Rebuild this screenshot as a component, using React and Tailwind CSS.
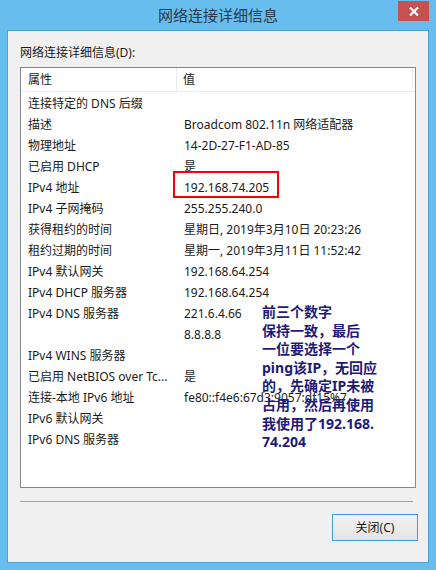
const FONT = { fontFamily: '"Noto Sans", "Noto Sans CJK SC", sans-serif' };

const ROWS = [
  ["连接特定的 DNS 后缀", ""],
  ["描述", "Broadcom 802.11n 网络适配器"],
  ["物理地址", "14-2D-27-F1-AD-85"],
  ["已启用 DHCP", "是"],
  ["IPv4 地址", "192.168.74.205"],
  ["IPv4 子网掩码", "255.255.240.0"],
  ["获得租约的时间", "星期日, 2019年3月10日 20:23:26"],
  ["租约过期的时间", "星期一, 2019年3月11日 11:52:42"],
  ["IPv4 默认网关", "192.168.64.254"],
  ["IPv4 DHCP 服务器", "192.168.64.254"],
  ["IPv4 DNS 服务器", "221.6.4.66"],
  ["", "8.8.8.8"],
  ["IPv4 WINS 服务器", ""],
  ["已启用 NetBIOS over Tc...", "是"],
  ["连接-本地 IPv6 地址", "fe80::f4e6:67d3:9057:df15%7"],
  ["IPv6 默认网关", ""],
  ["IPv6 DNS 服务器", ""],
];

const NOTE = [
  "前三个数字",
  "保持一致，最后",
  "一位要选择一个",
  "ping该IP，无回应",
  "的，先确定IP未被",
  "占用，然后再使用",
  "我使用了192.168.",
  "74.204",
];

export default function App() {
  return (
    <div
      className="relative h-[570px] w-[436px] overflow-hidden bg-[#67bdee] text-[12px] text-[#1a1a1a]"
      style={FONT}
    >
      {/* title bar */}
      <div className="flex h-[30px] items-center justify-center pt-[1px] text-[15px] text-[#2b3a45]">
        网络连接详细信息
      </div>
      <button
        type="button"
        className="absolute right-[7px] top-[1px] flex h-[20px] w-[31px] items-center justify-center bg-[#c75050]"
        aria-label="关闭"
      >
        <svg width="10" height="9" viewBox="0 0 10 9">
          <path d="M1 0.5 L9 8.5 M9 0.5 L1 8.5" stroke="#fff" strokeWidth="2.2" />
        </svg>
      </button>

      {/* client area */}
      <div className="ml-[7px] flex h-[533px] w-[422px] flex-col border border-[#4f9fd3] bg-[#f0f0f0] pl-[12px] pr-[10px] pt-[14px]">
        <div className="h-[16px] leading-[16px]">网络连接详细信息(D):</div>

        <div className="mt-[6px] h-[421px] w-[396px] border border-[#828790] bg-white">
          <div className="flex h-[24px] border-b border-[#e6ecf3] leading-[23px]">
            <div className="w-[156px] border-r border-[#e8eaee] pl-[7px]">属性</div>
            <div className="w-[236px] border-r border-[#e8eaee] pl-[6px]">值</div>
          </div>
          <div className="pt-[1px]">
            {ROWS.map(([k, v], i) => (
              <div key={i} className="flex h-[21px] items-center whitespace-nowrap">
                <div className="w-[156px] overflow-hidden pl-[7px]">{k}</div>
                <div className="pl-[7px]">{v}</div>
              </div>
            ))}
          </div>
        </div>

        <div className="mt-[13px] h-[2px] w-[393px] border-t border-[#a0a0a0] border-b-white" />

        <div className="mt-[11px] flex justify-end">
          <button
            type="button"
            className="h-[27px] w-[86px] border border-[#3c9af0] bg-gradient-to-b from-[#f2f2f2] to-[#e4e4e4] text-[12px]"
          >
            关闭(C)
          </button>
        </div>
      </div>

      {/* highlight box */}
      <div className="absolute left-[173px] top-[171px] h-[27px] w-[106px] border-2 border-[#ff0000]" />

      {/* annotation */}
      <div className="absolute left-[262px] top-[303px] whitespace-nowrap text-[14px] font-bold leading-[18.6px] text-[#1e1b78]">
        {NOTE.map((line, i) => (
          <div key={i}>{line}</div>
        ))}
      </div>
    </div>
  );
}
